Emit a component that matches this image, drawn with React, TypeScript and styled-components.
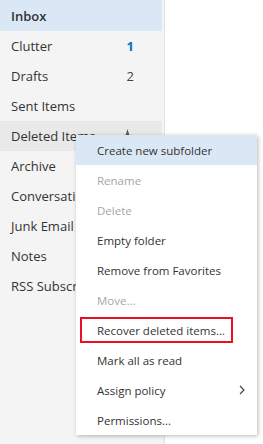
import styled, { createGlobalStyle } from "styled-components";

const GlobalStyle = createGlobalStyle`
  html, body { margin: 0; padding: 0; background: #fff; }
  body {
    font-family: "Open Sans", "Noto Sans", "Liberation Sans", sans-serif;
    color: #333;
    overflow: hidden;
  }
`;

const Page = styled.div`
  position: relative;
  display: flex;
  width: 263px;
  height: 444px;
  overflow: hidden;
  background: #fff;
`;

const Sidebar = styled.nav`
  width: 164px;
  flex: none;
  background: #f4f4f4;
  border-right: 1px solid #e3e3e3;
  display: flex;
  flex-direction: column;
`;

const FolderRow = styled.div<{ $state?: "selected" | "hover" }>`
  height: 30px;
  width: 162px;
  box-sizing: border-box;
  padding: 0 28px 0 11px;
  display: flex;
  align-items: center;
  justify-content: space-between;
  font-size: 13px;
  white-space: nowrap;
  color: #333;
  font-weight: ${(p) => (p.$state === "selected" ? 600 : 400)};
  background: ${(p) =>
    p.$state === "selected" ? "#dae8f6" : p.$state === "hover" ? "#e9e9e9" : "transparent"};
  &:first-child { height: 31px; }
`;

const Count = styled.span<{ $unread?: boolean }>`
  font-size: 13px;
  color: ${(p) => (p.$unread ? "#0072c6" : "#444")};
  font-weight: ${(p) => (p.$unread ? 700 : 400)};
`;

const PinIcon = styled.svg`
  width: 11px;
  height: 11px;
  margin-right: 1px;
  margin-top: -6px;
`;

const Main = styled.main`
  flex: 1;
  padding: 288px 0 0 150px;
  font-size: 13px;
  white-space: nowrap;
`;

const MessageLine = styled.div<{ $color: string }>`
  height: 30px;
  color: ${(p) => p.$color};
  &:nth-child(2) { margin-top: 31px; }
`;

const Menu = styled.ul`
  position: absolute;
  left: 76px;
  top: 135px;
  width: 181px;
  margin: 0;
  padding: 0;
  list-style: none;
  background: #fff;
  box-shadow: 1px 1px 4px rgba(0, 0, 0, 0.28);
`;

const MenuItem = styled.li<{ $disabled?: boolean; $active?: boolean }>`
  position: relative;
  height: 30px;
  display: flex;
  align-items: center;
  justify-content: space-between;
  padding: 0 11px 0 21px;
  font-size: 11.5px;
  white-space: nowrap;
  color: ${(p) => (p.$disabled ? "#a6a6a6" : "#333")};
  background: ${(p) => (p.$active ? "#dae8f6" : "#fff")};
`;

const Highlight = styled.span`
  position: absolute;
  left: 4px;
  top: 2px;
  width: 153px;
  height: 26px;
  box-sizing: border-box;
  border: 2.5px solid #e81123;
`;

const Chevron = styled.svg`
  width: 8px;
  height: 10px;
`;

const folders: { name: string; count?: string; unread?: boolean; state?: "selected" | "hover" }[] = [
  { name: "Inbox", state: "selected" },
  { name: "Clutter", count: "1", unread: true },
  { name: "Drafts", count: "2" },
  { name: "Sent Items" },
  { name: "Deleted Items", state: "hover" },
  { name: "Archive" },
  { name: "Conversation History" },
  { name: "Junk Email" },
  { name: "Notes" },
  { name: "RSS Subscriptions" },
];

const menuItems: { label: string; disabled?: boolean; active?: boolean; boxed?: boolean; sub?: boolean }[] = [
  { label: "Create new subfolder", active: true },
  { label: "Rename", disabled: true },
  { label: "Delete", disabled: true },
  { label: "Empty folder" },
  { label: "Remove from Favorites" },
  { label: "Move...", disabled: true },
  { label: "Recover deleted items...", boxed: true },
  { label: "Mark all as read" },
  { label: "Assign policy", sub: true },
  { label: "Permissions..." },
];

export default function App() {
  return (
    <Page>
      <GlobalStyle />
      <Sidebar>
        {folders.map((f) => (
          <FolderRow key={f.name} $state={f.state}>
            <span>{f.name}</span>
            {f.count && <Count $unread={f.unread}>{f.count}</Count>}
            {f.state === "hover" && (
              <PinIcon viewBox="0 0 11 11">
                <path d="M5.5 1 L7.3 7 H3.7 Z" fill="#555" />
                <path d="M1 7.5 H10" stroke="#555" strokeWidth="1.2" />
              </PinIcon>
            )}
          </FolderRow>
        ))}
      </Sidebar>
      <Main>
        <MessageLine $color="#333">Upcoming meeting notes and docs</MessageLine>
        <MessageLine $color="#5b2d90">Re: Weekly planning and budget</MessageLine>
      </Main>
      <Menu>
        {menuItems.map((m) => (
          <MenuItem key={m.label} $disabled={m.disabled} $active={m.active}>
            <span>{m.label}</span>
            {m.sub && (
              <Chevron viewBox="0 0 8 10">
                <path d="M2 1 L6 5 L2 9" fill="none" stroke="#444" strokeWidth="1.2" />
              </Chevron>
            )}
            {m.boxed && <Highlight />}
          </MenuItem>
        ))}
      </Menu>
    </Page>
  );
}
